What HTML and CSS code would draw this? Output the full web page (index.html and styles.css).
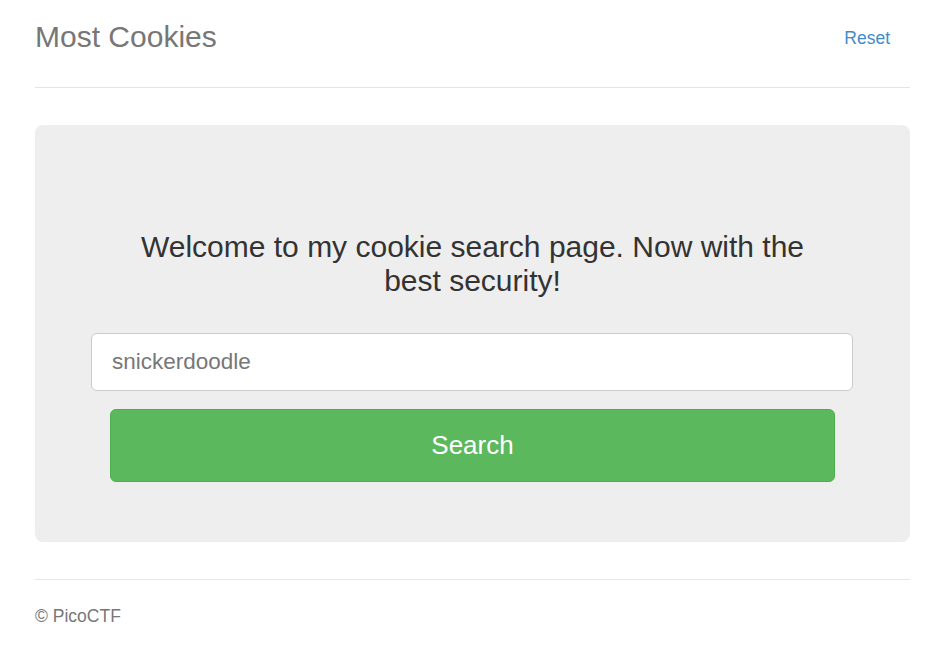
FILE: index.html
```html
<!DOCTYPE html>
<html lang="en">
<head>
<meta charset="utf-8">
<title>Most Cookies</title>
<link rel="stylesheet" href="styles.css">
</head>
<body>
<div class="container">
  <div class="header">
    <h3 class="title">Most Cookies</h3>
    <a class="reset" href="#">Reset</a>
  </div>
  <div class="jumbotron">
    <p class="lead">Welcome to my cookie search page. Now with the best security!</p>
    <form class="search-form">
      <input class="search-input" type="text" value="snickerdoodle">
      <button class="search-btn" type="button">Search</button>
    </form>
  </div>
  <footer class="footer">
    <p class="copy">&copy; PicoCTF</p>
  </footer>
</div>
</body>
</html>
```

FILE: styles.css
```css
* { box-sizing: border-box; }
html, body {
  margin: 0;
  padding: 0;
  background: #fff;
  font-family: "Liberation Sans", Arial, sans-serif;
  color: #333;
}
.container {
  padding: 0 24px 0 35px;
}
.header {
  display: flex;
  justify-content: space-between;
  align-items: flex-start;
  padding-top: 20px;
  padding-bottom: 34px;
  border-bottom: 1px solid #e5e5e5;
}
.title {
  margin: 0;
  font-size: 30px;
  line-height: 33px;
  font-weight: normal;
  color: #777;
}
.reset {
  margin-top: 6px;
  margin-right: 20px;
  font-size: 17.5px;
  line-height: 25px;
  color: #428bca;
  text-decoration: none;
}
.jumbotron {
  margin-top: 37px;
  background: #eee;
  border-radius: 8px;
  padding: 105px 0 60px;
  text-align: center;
}
.lead {
  margin: 0 auto;
  max-width: 700px;
  font-size: 30px;
  line-height: 34px;
  color: #333;
}
.search-form {
  margin-top: 35px;
  display: flex;
  flex-direction: column;
  align-items: stretch;
}
.search-input {
  margin: 0 57px 0 56px;
  height: 58px;
  padding: 0 20px;
  font-family: "Liberation Sans", Arial, sans-serif;
  font-size: 22.5px;
  color: #777;
  background: #fff;
  border: 1px solid #ccc;
  border-radius: 6px;
  outline: none;
}
.search-btn {
  margin: 18px 75px 0;
  height: 73px;
  font-family: "Liberation Sans", Arial, sans-serif;
  font-size: 26px;
  color: #fff;
  background: #5cb85c;
  border: 1px solid #4cae4c;
  border-radius: 6px;
  cursor: pointer;
}
.footer {
  margin-top: 37px;
  border-top: 1px solid #e5e5e5;
  padding-top: 24px;
}
.copy {
  margin: 0;
  font-size: 17.5px;
  line-height: 25px;
  color: #777;
}
```
